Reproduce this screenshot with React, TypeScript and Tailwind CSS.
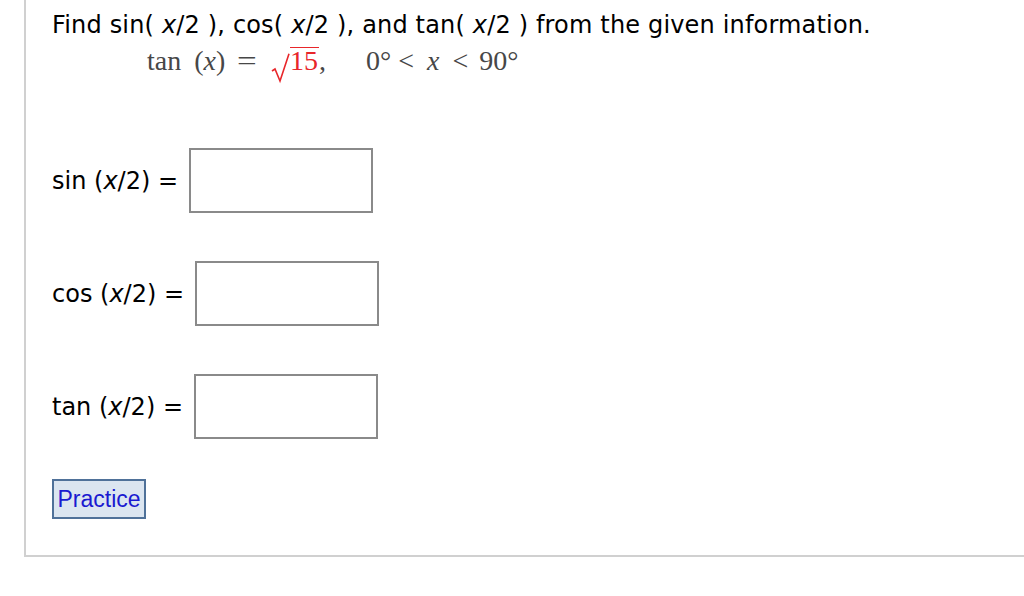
import React from "react";

const verdana = { fontFamily: "Verdana, 'DejaVu Sans', sans-serif" };
const serif = { fontFamily: "'Liberation Serif', 'Times New Roman', serif" };

function AnswerRow({ fn }: { fn: string }) {
  return (
    <div className="flex items-center">
      <div className="text-[24px] text-black whitespace-pre" style={verdana}>
        {fn} (<i>x</i>/2) =
      </div>
      <div className="ml-[11px] h-[65px] w-[184px] border-2 border-[#8a8a8a] bg-white" />
    </div>
  );
}

function Radical() {
  return (
    <svg width="19" height="31" viewBox="0 0 19 31" className="self-start mt-[6px]">
      <path d="M1 18 L4 16 L9 28 L18 0.8" fill="none" stroke="#e8262a" strokeWidth="1.6" />
    </svg>
  );
}

export default function App() {
  return (
    <div className="w-full h-[596px] bg-white overflow-hidden">
      <div className="ml-[24px] h-[557px] border-l-2 border-b-2 border-[#d0d0d0] pl-[26px]">
        <div
          className="pt-[11px] text-[24px] tracking-[0.17px] leading-[28px] text-black whitespace-nowrap"
          style={verdana}
        >
          Find sin( <i>x</i>/2 ), cos( <i>x</i>/2 ), and tan( <i>x</i>/2 ) from the given information.
        </div>

        <div
          className="mt-[4px] ml-[95px] h-[36px] flex items-baseline leading-[36px] text-[28px] text-[#474747] whitespace-pre"
          style={serif}
        >
          <span>tan</span>
          <span className="ml-[13px]">(</span>
          <i>x</i>
          <span>)</span>
          <span className="ml-[14px] inline-block scale-x-125">=</span>
          <span className="ml-[16px] flex items-baseline text-[#e8262a]">
            <Radical />
            <span className="border-t-[1.6px] border-[#e8262a] leading-[26px] pr-[1px]">15</span>
          </span>
          <span>,</span>
          <span className="ml-[40px]">0°</span>
          <span className="ml-[7px]">&lt;</span>
          <i className="ml-[13px]">x</i>
          <span className="ml-[13px]">&lt;</span>
          <span className="ml-[11px]">90°</span>
        </div>

        <div className="mt-[69px]">
          <AnswerRow fn="sin" />
        </div>
        <div className="mt-[48px]">
          <AnswerRow fn="cos" />
        </div>
        <div className="mt-[48px]">
          <AnswerRow fn="tan" />
        </div>

        <button
          className="mt-[40px] h-[40px] w-[94px] border-2 border-[#4f7199] bg-[#dbe5f0] text-[23px] text-[#1a1ad0] flex items-center justify-center"
          style={{ fontFamily: "Arial, 'Liberation Sans', sans-serif" }}
        >
          Practice
        </button>
      </div>
    </div>
  );
}
